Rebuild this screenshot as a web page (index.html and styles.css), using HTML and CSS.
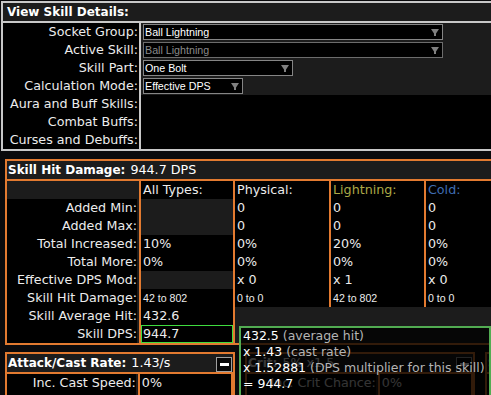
FILE: index.html
```html
<!DOCTYPE html>
<html lang="en">
<head>
 <meta charset="UTF-8">
 <meta name="viewport" content="width=device-width, initial-scale=1.0">
 <title>Calcs</title>
 <link rel="stylesheet" href="styles.css">
</head>
<body>
 <div class="page">

 <div class="panel panel-main">
  <div class="panel-head">View Skill Details:</div>
  <div class="details">
   <div class="labels">
    <div class="lab">Socket Group:</div>
    <div class="lab">Active Skill:</div>
    <div class="lab">Skill Part:</div>
    <div class="lab">Calculation Mode:</div>
    <div class="lab">Aura and Buff Skills:</div>
    <div class="lab">Combat Buffs:</div>
    <div class="lab">Curses and Debuffs:</div>
   </div>
   <div class="controls">
    <div class="ctrl-row">
     <div class="dropdown w300"><span>Ball Lightning</span><svg class="arrow" width="8" height="7" viewBox="0 0 8 7"><path d="M0 0H8L5 4.5V7H3V4.5Z"/></svg></div>
    </div>
    <div class="ctrl-row">
     <div class="dropdown w300 disabled"><span>Ball Lightning</span><svg class="arrow" width="8" height="7" viewBox="0 0 8 7"><path d="M0 0H8L5 4.5V7H3V4.5Z"/></svg></div>
    </div>
    <div class="ctrl-row">
     <div class="dropdown w150"><span>One Bolt</span><svg class="arrow" width="8" height="7" viewBox="0 0 8 7"><path d="M0 0H8L5 4.5V7H3V4.5Z"/></svg></div>
    </div>
    <div class="ctrl-row">
     <div class="dropdown w100"><span>Effective DPS</span><svg class="arrow" width="8" height="7" viewBox="0 0 8 7"><path d="M0 0H8L5 4.5V7H3V4.5Z"/></svg></div>
    </div>
   </div>
  </div>
 </div>

 <div class="panel panel-calc">
  <div class="panel-head"><b>Skill Hit Damage:</b> <span class="head-val">944.7 DPS</span></div>
  <div class="calc-body">
   <div class="label-col">
    <div class="cell empty"></div>
    <div class="lab">Added Min:</div>
    <div class="lab">Added Max:</div>
    <div class="lab">Total Increased:</div>
    <div class="lab">Total More:</div>
    <div class="lab">Effective DPS Mod:</div>
    <div class="lab">Skill Hit Damage:</div>
    <div class="lab">Skill Average Hit:</div>
    <div class="lab">Skill DPS:</div>
   </div>
   <div class="col col-all">
    <div class="cell">All Types:</div>
    <div class="cell empty"></div>
    <div class="cell empty"></div>
    <div class="cell">10%</div>
    <div class="cell">0%</div>
    <div class="cell empty"></div>
    <div class="cell small">42 to 802</div>
    <div class="cell">432.6</div>
    <div class="cell active">944.7</div>
   </div>
   <div class="col col-phys">
    <div class="cell">Physical:</div>
    <div class="cell">0</div>
    <div class="cell">0</div>
    <div class="cell">0%</div>
    <div class="cell">0%</div>
    <div class="cell">x 0</div>
    <div class="cell small">0 to 0</div>
   </div>
   <div class="col">
    <div class="cell lightning">Lightning:</div>
    <div class="cell">0</div>
    <div class="cell">0</div>
    <div class="cell">20%</div>
    <div class="cell">0%</div>
    <div class="cell">x 1</div>
    <div class="cell small">42 to 802</div>
   </div>
   <div class="col">
    <div class="cell cold">Cold:</div>
    <div class="cell">0</div>
    <div class="cell">0</div>
    <div class="cell">0%</div>
    <div class="cell">0%</div>
    <div class="cell">x 0</div>
    <div class="cell small">0 to 0</div>
   </div>
  </div>
 </div>

 <div class="panel-row">
  <div class="panel panel-small">
   <div class="panel-head"><b>Attack/Cast Rate:</b> <span class="head-val">1.43/s</span><span class="toggle"></span></div>
   <div class="calc-body">
    <div class="label-col">
     <div class="lab">Inc. Cast Speed:</div>
     <div class="lab"></div>
    </div>
    <div class="col col-all">
     <div class="cell">0%</div>
     <div class="cell"></div>
    </div>
   </div>
  </div>
  <div class="panel panel-small">
   <div class="panel-head"><b>Crit:</b> <span class="head-val">5% x1.5</span><span class="toggle"></span></div>
   <div class="calc-body">
    <div class="label-col">
     <div class="lab">Inc. Crit Chance:</div>
     <div class="lab"></div>
    </div>
    <div class="col col-all">
     <div class="cell">0%</div>
     <div class="cell"></div>
    </div>
   </div>
  </div>
  <div class="panel panel-small">
   <div class="panel-head"><b>Speed:</b></div>
   <div class="calc-body">
    <div class="label-col">
     <div class="lab"></div>
    </div>
   </div>
  </div>
 </div>

 <div class="tooltip">
  <div>432.5 <span class="note">(average hit)</span></div>
  <div>x 1.43 <span class="note">(cast rate)</span></div>
  <div>x 1.52881 <span class="note">(DPS multiplier for this skill)</span></div>
  <div>= 944.7</div>
 </div>

 </div>
</body>
</html>
```

FILE: styles.css
```css
html, body {
    margin: 0;
    overflow: hidden;
    background-color: #0a0a0c;
}

.page {
    position: relative;
    width: 491px;
    height: 395px;
    overflow: hidden;
    font-family: "DejaVu Sans", sans-serif;
    font-size: 12.7px;
    color: #ececec;
}

.panel {
    box-sizing: border-box;
    border: 2px solid #e27a30;
}

.panel-head {
    height: 18px;
    line-height: 18px;
    background-color: #1c1c1c;
    border-bottom: 2px solid #e27a30;
    padding-left: 1px;
    white-space: nowrap;
    display: flex;
    color: #fff;
}

.panel-head b,
.panel-main .panel-head {
    font-weight: bold;
    font-size: 12px;
}

.head-val {
    margin-left: 5px;
}

.lab {
    height: 18px;
    line-height: 18px;
    text-align: right;
    white-space: nowrap;
    background-color: #000;
}

/* view skill details */

.panel-main {
    margin: 1px 0 0 1px;
    width: 600px;
    border-color: #c8c8c8;
}

.panel-main .panel-head {
    padding-left: 4px;
    border-bottom-color: #c8c8c8;
}

.details {
    display: flex;
}

.labels {
    width: 136px;
    background-color: #000;
}

.labels .lab {
    padding-right: 1px;
}

.controls {
    flex: 1;
    border-left: 2px solid #c8c8c8;
    background-color: #000;
}

.ctrl-row {
    height: 18px;
    box-sizing: border-box;
    padding: 1px 0 0 2px;
    background-color: #1c1c1c;
}

.dropdown {
    height: 16px;
    box-sizing: border-box;
    border: 1px solid #858585;
    background-color: #000;
    display: flex;
    align-items: center;
    justify-content: space-between;
    padding: 0 3px 0 1px;
    font-family: "Liberation Sans", Arial, sans-serif;
    font-size: 10.7px;
    color: #fff;
}

.dropdown.disabled {
    color: #8a8a8a;
    border-color: #6c6c6c;
}

.arrow {
    fill: #808080;
}

.w300 { width: 300px; }
.w150 { width: 150px; }
.w100 { width: 100px; }

/* calc sections */

.panel-calc {
    margin: 8px 0 0 5px;
    width: 600px;
}

.calc-body {
    display: flex;
    align-items: flex-start;
    background-color: #1c1c1c;
}

.label-col {
    width: 130px;
    margin-right: 2px;
}

.col {
    width: 93px;
    border-right: 2px solid #e27a30;
}

.col-all {
    width: 92px;
    border-left: 2px solid #e27a30;
}

.col-phys {
    width: 94px;
}

.cell {
    height: 18px;
    line-height: 18px;
    box-sizing: border-box;
    padding-left: 2px;
    white-space: nowrap;
    background-color: #000;
}

.cell.empty {
    background-color: #1c1c1c;
}

.cell.small {
    font-family: "Liberation Sans", Arial, sans-serif;
    font-size: 10.6px;
}

.cell.active {
    border: 1px solid #3fdc3f;
    padding-left: 1px;
    line-height: 16px;
}

.lightning {
    color: #adaa47;
}

.cold {
    color: #3f6db3;
}

.panel-row {
    display: flex;
    gap: 10px;
    margin: 7px 0 0 5px;
}

.panel-small {
    flex: none;
    width: 230px;
}

.toggle {
    width: 14px;
    height: 13px;
    margin: 3px 1px 0 auto;
    border: 1px solid #a0a0a0;
    background-color: #080808;
    position: relative;
}

.toggle::after {
    content: "";
    position: absolute;
    left: 3px;
    top: 5px;
    width: 9px;
    height: 3px;
    background-color: #fff;
}

/* breakdown tooltip */

.tooltip {
    position: absolute;
    left: 239px;
    top: 326px;
    width: 246px;
    height: 80px;
    border: 2px solid #52ac52;
    background-color: rgba(0, 0, 0, 0.78);
    padding: 0 0 0 2px;
    font-size: 12.5px;
    line-height: 16px;
    color: #fff;
    white-space: nowrap;
}

.note {
    color: #b4b4b4;
}
```
